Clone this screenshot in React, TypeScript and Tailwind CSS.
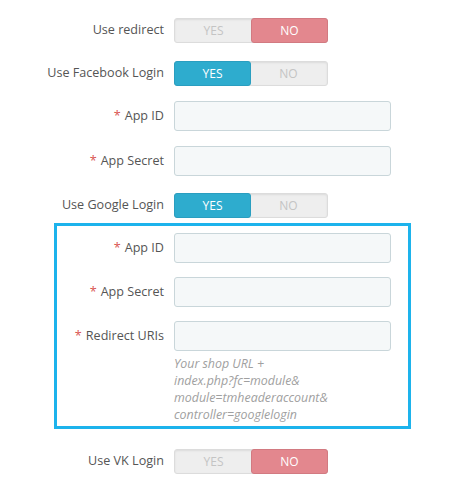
import React from 'react';

const font = { fontFamily: '"Open Sans", "Liberation Sans", sans-serif' };

type ToggleProps = { value: boolean };

const Toggle: React.FC<ToggleProps> = ({ value }) => (
  <div className="flex h-[25px] w-[154px] rounded-[3px] border border-[#dcdcdc] bg-[#eeeeee] shadow-[inset_0_1px_2px_rgba(0,0,0,0.08)] text-[12px] uppercase">
    <div
      className={
        value
          ? 'flex w-[77px] items-center justify-center rounded-[3px] -m-px h-[25px] bg-[#2eacce] border border-[#2a9ec0] text-white'
          : 'flex w-[77px] items-center justify-center text-[#c4c4c4]'
      }
    >
      YES
    </div>
    <div
      className={
        !value
          ? 'flex w-[77px] items-center justify-center rounded-[3px] -m-px h-[25px] bg-[#e3878e] border border-[#d27a81] text-white'
          : 'flex w-[77px] items-center justify-center text-[#c4c4c4]'
      }
    >
      NO
    </div>
  </div>
);

const Input: React.FC = () => (
  <div className="h-[30px] w-[217px] rounded-[3px] border border-[#c9d6da] bg-[#f5f8f9]" />
);

type RowProps = { label: string; required?: boolean; labelWidth?: string; children: React.ReactNode; className?: string };

const Row: React.FC<RowProps> = ({ label, required, labelWidth = 'w-[164px]', children, className = '' }) => (
  <div className={`flex items-center ${className}`}>
    <div className={`${labelWidth} shrink-0 text-right text-[12.6px] text-[#555]`}>
      {required && <span className="mr-1 text-[#d9534f]">*</span>}
      {label}
    </div>
    <div className="ml-[10px]">{children}</div>
  </div>
);

export default function App() {
  return (
    <div className="h-[488px] w-[474px] bg-white" style={font}>
      <div className="flex flex-col pt-[18px]">
        <Row label="Use redirect">
          <Toggle value={false} />
        </Row>
        <Row label="Use Facebook Login" className="mt-[18px]">
          <Toggle value={true} />
        </Row>
        <Row label="App ID" required className="mt-[15px]">
          <Input />
        </Row>
        <Row label="App Secret" required className="mt-[15px]">
          <Input />
        </Row>
        <Row label="Use Google Login" className="mt-[17px]">
          <Toggle value={true} />
        </Row>

        {/* Google settings block */}
        <div className="ml-[54px] mt-[5px] w-[357px] border-[3px] border-[#1db3ec] pt-[7px] pb-[3px]">
          <Row label="App ID" required labelWidth="w-[107px]">
            <Input />
          </Row>
          <Row label="App Secret" required labelWidth="w-[107px]" className="mt-[14px]">
            <Input />
          </Row>
          <Row label="Redirect URIs" required labelWidth="w-[107px]" className="mt-[14px]">
            <Input />
          </Row>
          <div className="ml-[117px] mt-[4px] text-[12.4px] italic leading-[17px] text-[#a0a0a0]">
            <div>Your shop URL +</div>
            <div>index.php?fc=module&amp;</div>
            <div>module=tmheaderaccount&amp;</div>
            <div>controller=googlelogin</div>
          </div>
        </div>

        <Row label="Use VK Login" className="mt-[20px]">
          <Toggle value={false} />
        </Row>
      </div>
    </div>
  );
}
